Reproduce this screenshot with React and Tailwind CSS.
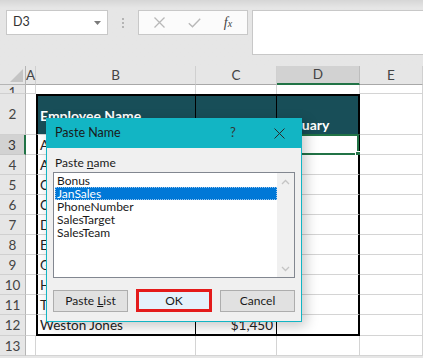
import React from 'react';

const COLS = [
  { key: 'A', w: 'w-[10px]' },
  { key: 'B', w: 'w-[160px]' },
  { key: 'C', w: 'w-[81px]' },
  { key: 'D', w: 'w-[83px]' },
  { key: 'E', w: 'flex-1' },
];

const ROWS = [
  { n: 1, h: 'h-[9px]' },
  { n: 2, h: 'h-[41px]' },
  { n: 3, b: 'Adam Clark', c: '$1,200' },
  { n: 4, b: 'Alice Brown', c: '$980' },
  { n: 5, b: 'Chris Evans', c: '$1,120' },
  { n: 6, b: 'Clara Hill', c: '$860' },
  { n: 7, b: 'David Lee', c: '$1,340' },
  { n: 8, b: 'Emma Stone', c: '$1,050' },
  { n: 9, b: 'George King', c: '$920' },
  { n: 10, b: 'Henry Ford', c: '$1,180' },
  { n: 11, b: 'Tina Moore', c: '$1,010' },
  { n: 12, h: 'h-[21px]', b: 'Weston Jones', c: '$1,450' },
  { n: 13 },
];

const ITEMS = ['Bonus', 'JanSales', 'PhoneNumber', 'SalesTarget', 'SalesTeam'];

function cellClass(n, key) {
  const inTable = n >= 2 && n <= 12;
  let cls = 'border-[#d4d4d4] ';
  if (key === 'A') {
    cls += inTable ? 'border-b bg-white' : 'border-r border-b bg-white';
    return cls;
  }
  if (key === 'E') return cls + 'border-r border-b bg-white';
  if (!inTable) {
    // row 1 sits above the table's top edge, row 13 below
    return cls + (n === 1 ? 'border-r bg-white' : 'border-r border-b bg-white');
  }
  if (key === 'B') cls += 'border-l-2 border-l-black border-r border-r-black ';
  if (key === 'C') cls += 'border-r border-r-black ';
  if (key === 'D') cls += 'border-r-2 border-r-black ';
  cls += n === 2 ? 'border-t-2 border-t-black bg-[#184e58] ' : 'bg-white ';
  cls += n === 12 ? 'border-b-2 border-b-black' : 'border-b';
  return cls;
}

function CellContent({ row, col }) {
  if (row.n === 2 && col === 'B') {
    return (
      <div className="h-full flex items-start pt-[11px] pl-[2px] text-[14px] leading-[17px] font-bold text-white whitespace-nowrap">
        Employee Name
      </div>
    );
  }
  if (row.n === 2 && col === 'D') {
    return (
      <div className="h-full flex items-end pb-[1px] pl-[4px] text-[14px] leading-[17px] font-bold text-white whitespace-nowrap">
        January
      </div>
    );
  }
  if (col === 'B' && row.b) {
    return <div className="h-full flex items-end pb-[1px] pl-[2px] whitespace-nowrap">{row.b}</div>;
  }
  if (col === 'C' && row.c) {
    return <div className="h-full flex items-end justify-end pb-[1px] pr-[3px] whitespace-nowrap">{row.c}</div>;
  }
  if (row.n === 3 && col === 'D') {
    return (
      <div className="absolute -left-[1px] -top-[1px] -right-[1px] -bottom-[1px] border-2 border-[#217346]">
        <div className="absolute -right-[4px] -bottom-[4px] w-[6px] h-[6px] bg-[#217346] border border-white" />
      </div>
    );
  }
  return null;
}

function Chevron({ up }) {
  return (
    <svg width="9" height="6" viewBox="0 0 9 6">
      <path d={up ? 'M1 5L4.5 1.5L8 5' : 'M1 1L4.5 4.5L8 1'} fill="none" stroke="#c4c4c4" strokeWidth="1.3" />
    </svg>
  );
}

function PasteNameDialog() {
  return (
    <div className="absolute left-[46px] top-[118px] z-20 w-[256px] flex flex-col shadow-[4px_4px_12px_rgba(0,0,0,0.22)] font-['Lato','Noto_Sans',sans-serif] text-[#1a1a1a]">
      <div className="h-[30px] bg-[#12b5c4] flex items-center pl-[9px] pr-[13px]">
        <span className="flex-1 text-[12.5px]">Paste Name</span>
        <span className="w-[20px] mr-[26px] text-center text-[13px] text-[#333]">?</span>
        <span className="w-[20px] flex justify-center">
          <svg width="11" height="11" viewBox="0 0 11 11">
            <path d="M0.5 0.5L10.5 10.5M10.5 0.5L0.5 10.5" stroke="#2a2a2a" strokeWidth="1" />
          </svg>
        </span>
      </div>
      <div className="bg-[#f0f0f0] border-x border-b border-[#12b5c4] px-[6px] pt-[8px] pb-[9px] text-[12px]">
        <div className="pl-[2px] leading-[13px]">
          Paste <span className="underline">n</span>ame
        </div>
        <div className="mt-[3px] h-[106px] bg-white border border-[#828790] flex">
          <div className="flex-1 pt-[1px] pl-[1px]">
            {ITEMS.map((item) => (
              <div
                key={item}
                className={
                  item === 'JanSales'
                    ? 'h-[13px] leading-[13px] pl-[2px] bg-[#0078d7] text-white outline outline-1 outline-dotted outline-[#9cc6ee] -outline-offset-1'
                    : 'h-[13px] leading-[13px] pl-[2px]'
                }
              >
                {item}
              </div>
            ))}
          </div>
          <div className="w-[17px] bg-[#f0f0f0] flex flex-col justify-between">
            <div className="h-[17px] flex items-center justify-center"><Chevron up /></div>
            <div className="h-[17px] flex items-center justify-center"><Chevron /></div>
          </div>
        </div>
        <div className="mt-[11px] flex items-center justify-between">
          <button className="w-[75px] h-[22px] bg-[#e1e1e1] border border-[#adadad] text-[12px]">
            Paste <span className="underline">L</span>ist
          </button>
          <button className="w-[76px] h-[23px] bg-[#e5f1fb] border-[3px] border-[#e41b1b] text-[12px]">
            OK
          </button>
          <button className="w-[75px] h-[22px] bg-[#e1e1e1] border border-[#adadad] text-[12px]">
            Cancel
          </button>
        </div>
      </div>
    </div>
  );
}

export default function App() {
  return (
    <div className="relative w-[423px] h-[358px] overflow-hidden bg-[#e6e6e6] font-['Lato','Noto_Sans',sans-serif] text-[#222]">
      {/* formula bar area */}
      <div className="h-[66px] bg-gradient-to-b from-[#d6d6d6] to-[#e6e6e6] to-[12%] flex items-start pt-[10px]">
        <div className="ml-[6px] w-[102px] h-[25px] bg-white border border-[#c8c8c8] flex items-center justify-between pl-[6px] pr-[6px]">
          <span className="text-[12.5px] text-[#333]">D3</span>
          <svg width="7" height="4" viewBox="0 0 7 4"><path d="M0 0H7L3.5 4Z" fill="#7a7a7a" /></svg>
        </div>
        <div className="w-[30px] h-[25px] flex flex-col items-center justify-center gap-[2px]">
          <span className="w-[2px] h-[2px] bg-[#b4b4b4]" />
          <span className="w-[2px] h-[2px] bg-[#b4b4b4]" />
          <span className="w-[2px] h-[2px] bg-[#b4b4b4]" />
        </div>
        <div className="w-[110px] h-[25px] bg-[#fbfbfb] border border-[#c8c8c8] flex items-center">
          <span className="w-[40px] flex justify-center">
            <svg width="11" height="11" viewBox="0 0 11 11">
              <path d="M0.5 0.5L10.5 10.5M10.5 0.5L0.5 10.5" stroke="#b8b8b8" strokeWidth="1.3" />
            </svg>
          </span>
          <span className="w-[30px] flex justify-center">
            <svg width="13" height="10" viewBox="0 0 13 10">
              <path d="M0.8 5.2L4.5 8.8L12.2 0.8" fill="none" stroke="#b8b8b8" strokeWidth="1.4" />
            </svg>
          </span>
          <span className="flex-1 flex justify-center font-['Liberation_Serif',serif] italic text-[14px] text-[#444]">
            f<span className="text-[10px] mt-[4px]">x</span>
          </span>
        </div>
        <div className="ml-[4px] flex-1 h-[45px] bg-white border-y border-l border-[#c8c8c8]" />
      </div>

      {/* column headers */}
      <div className="h-[19px] flex text-[13.5px] text-[#444]">
        <div className="w-[26px] border-r border-b border-[#b5b5b5] flex items-end justify-end pr-[2px] pb-[2px]">
          <svg width="13" height="13" viewBox="0 0 13 13"><path d="M13 0V13H0Z" fill="#c4c4c4" /></svg>
        </div>
        {COLS.map((col) => (
          <div
            key={col.key}
            className={
              col.key === 'D'
                ? `${col.w} bg-[#d2d2d2] border-r border-[#bdbdbd] border-b-2 border-b-[#217346] flex items-center justify-center`
                : `${col.w} border-r border-b border-[#d0d0d0] border-b-[#a8a8a8] flex items-center justify-center`
            }
          >
            {col.key}
          </div>
        ))}
      </div>

      {/* sheet rows */}
      {ROWS.map((row) => (
        <div key={row.n} className={`${row.h || 'h-[20px]'} flex text-[13.5px] leading-[16px]`}>
          <div
            className={
              row.n === 3
                ? 'w-[26px] bg-[#d2d2d2] border-b border-[#c8c8c8] border-r-2 border-r-[#217346] flex items-center justify-center text-[#333]'
                : `w-[26px] border-b border-r border-[#d0d0d0] border-r-[#b5b5b5] flex justify-center overflow-hidden text-[#444] ${row.n === 1 ? 'items-start' : 'items-center'}`
            }
          >
            <span className={row.n === 1 ? '-mt-[1px]' : ''}>{row.n}</span>
          </div>
          {COLS.map((col) => (
            <div key={col.key} className={`${col.w} relative ${cellClass(row.n, col.key)}`}>
              <CellContent row={row} col={col.key} />
            </div>
          ))}
        </div>
      ))}

      <PasteNameDialog />
    </div>
  );
}
